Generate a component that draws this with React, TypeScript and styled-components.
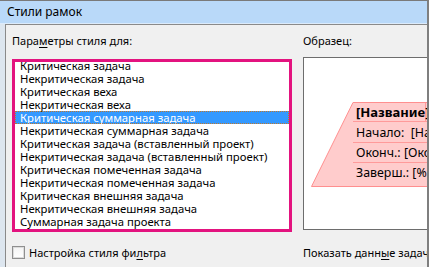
import React from 'react';
import styled, { createGlobalStyle } from 'styled-components';

const GlobalStyle = createGlobalStyle`
  html, body {
    margin: 0;
    padding: 0;
    background: #ffffff;
  }
  body {
    font-family: "Noto Sans", "Open Sans", sans-serif;
    color: #000;
  }
  * {
    box-sizing: border-box;
  }
`;

const Window = styled.div`
  width: 429px;
  height: 267px;
  display: flex;
  flex-direction: column;
  overflow: hidden;
  background: #b9d9f9;
  border-top: 1px solid #7a7a7a;
  border-right: 2px solid #7f7f7f;
`;

const TitleBar = styled.div`
  height: 23px;
  flex-shrink: 0;
  display: flex;
  align-items: center;
  padding: 0 0 1px 7px;
  font-size: 12px;
  border-bottom: 1px solid #dcebfb;
`;

const Frame = styled.div`
  flex: 1;
  display: flex;
  min-height: 0;
`;

const FrameEdge = styled.div`
  width: 5px;
  flex-shrink: 0;
  background: #dde6ef;
`;

const Client = styled.div`
  flex: 1;
  display: grid;
  grid-template-columns: 280px 1fr;
  column-gap: 11px;
  padding-left: 6px;
  background: #f0f0f0;
  border-top: 1px solid #8a8a8a;
  border-left: 1px solid #8a8a8a;
  font-size: 11px;
  min-width: 0;
`;

const Column = styled.div`
  display: flex;
  flex-direction: column;
  min-width: 0;
`;

const Label = styled.div`
  height: 15px;
  line-height: 15px;
  margin-top: 8px;
  white-space: nowrap;
`;

const Key = styled.span`
  text-decoration: underline;
  text-underline-offset: 2px;
`;

const ListFrame = styled.div`
  position: relative;
  margin-top: 11px;
  height: 173px;
  background: #ffffff;
  overflow: hidden;
`;

const List = styled.ul`
  list-style: none;
  margin: 0;
  padding: 0;
  font-size: 11.3px;
`;

const Item = styled.li<{ $selected?: boolean }>`
  height: 13px;
  line-height: 13px;
  padding-left: 5px;
  margin: 0 3px;
  white-space: nowrap;
  background: ${(p) => (p.$selected ? '#3399ff' : 'transparent')};
  color: ${(p) => (p.$selected ? '#ffffff' : '#000000')};
  outline: ${(p) => (p.$selected ? '1px dotted #c0782c' : 'none')};
  outline-offset: -1px;
`;

const Highlight = styled.div`
  position: absolute;
  inset: 0;
  border: 3px solid #e3137f;
  pointer-events: none;
`;

const Footer = styled.div<{ $top: number }>`
  display: flex;
  align-items: center;
  gap: 4px;
  margin-top: ${(p) => p.$top}px;
  height: 15px;
  white-space: nowrap;
`;

const CheckBox = styled.span`
  width: 13px;
  height: 13px;
  flex-shrink: 0;
  border: 1px solid #8f8f8f;
  background: linear-gradient(#f4f4f4, #ffffff);
  box-shadow: inset 0 0 0 1px #dcdcdc;
`;

const Preview = styled.div`
  margin-top: 9px;
  height: 173px;
  background: #ffffff;
  border: 1px solid #6d6d6d;
  border-right: none;
  overflow: hidden;
  padding: 44px 0 0 7px;
`;

const Node = styled.div`
  display: flex;
  width: 260px;
  height: 85px;
  font-size: 12.4px;
`;

const Slant = styled.svg`
  width: 42px;
  height: 85px;
  flex-shrink: 0;
  display: block;
`;

const Table = styled.div`
  flex: 1;
  display: flex;
  flex-direction: column;
  background: #ffcccc;
  border-top: 1px solid #ff8f8f;
  border-bottom: 1px solid #ff8f8f;
`;

const Row = styled.div<{ $h: number; $last?: boolean }>`
  height: ${(p) => p.$h}px;
  line-height: ${(p) => p.$h}px;
  padding-left: 3px;
  white-space: pre;
  border-bottom: ${(p) => (p.$last ? 'none' : '1px solid #ff9a9a')};
`;

const TitleRow = styled(Row)`
  padding-left: 0;
`;

const TitleCell = styled.span`
  display: inline-block;
  width: 73px;
  height: 100%;
  padding-left: 3px;
  font-size: 13px;
  font-weight: bold;
  border-right: 1px solid #ff9a9a;
`;

const items = [
  'Критическая задача',
  'Некритическая задача',
  'Критическая веха',
  'Некритическая веха',
  'Критическая суммарная задача',
  'Некритическая суммарная задача',
  'Критическая задача (вставленный проект)',
  'Некритическая задача (вставленный проект)',
  'Критическая помеченная задача',
  'Некритическая помеченная задача',
  'Критическая внешняя задача',
  'Некритическая внешняя задача',
  'Суммарная задача проекта',
];

const App = () => {
  return (
    <>
      <GlobalStyle />
      <Window>
        <TitleBar>Стили рамок</TitleBar>
        <Frame>
          <FrameEdge />
          <Client>
            <Column>
              <Label>
                Пара<Key>м</Key>етры стиля для:
              </Label>
              <ListFrame>
                <List>
                  {items.map((item, i) => (
                    <Item key={item} $selected={i === 4}>
                      {item}
                    </Item>
                  ))}
                </List>
                <Highlight />
              </ListFrame>
              <Footer $top={13}>
                <CheckBox />
                <span>
                  Настройка стиля фи<Key>л</Key>ьтра
                </span>
              </Footer>
            </Column>
            <Column>
              <Label>Образец:</Label>
              <Preview>
                <Node>
                  <Slant viewBox="0 0 42 85">
                    <polygon points="42,0.5 0.5,84.5 42,84.5" fill="#ffcccc" />
                    <line x1="42" y1="0.5" x2="0.5" y2="84.5" stroke="#ff8f8f" strokeWidth="1" />
                    <line x1="0.5" y1="84.5" x2="42" y2="84.5" stroke="#ff8f8f" strokeWidth="1" />
                  </Slant>
                  <Table>
                    <TitleRow $h={19}>
                      <TitleCell>[Название]</TitleCell>
                    </TitleRow>
                    <Row $h={21}>{'Начало:  [Начало]'}</Row>
                    <Row $h={20}>{'Оконч.: [Окончание]'}</Row>
                    <Row $h={20} $last>
                      {'Заверш.: [% завершения]'}
                    </Row>
                  </Table>
                </Node>
              </Preview>
              <Footer $top={15}>
                <span>
                  Показать данн<Key>ы</Key>е задачи для:
                </span>
              </Footer>
            </Column>
          </Client>
        </Frame>
      </Window>
    </>
  );
};

export default App;
